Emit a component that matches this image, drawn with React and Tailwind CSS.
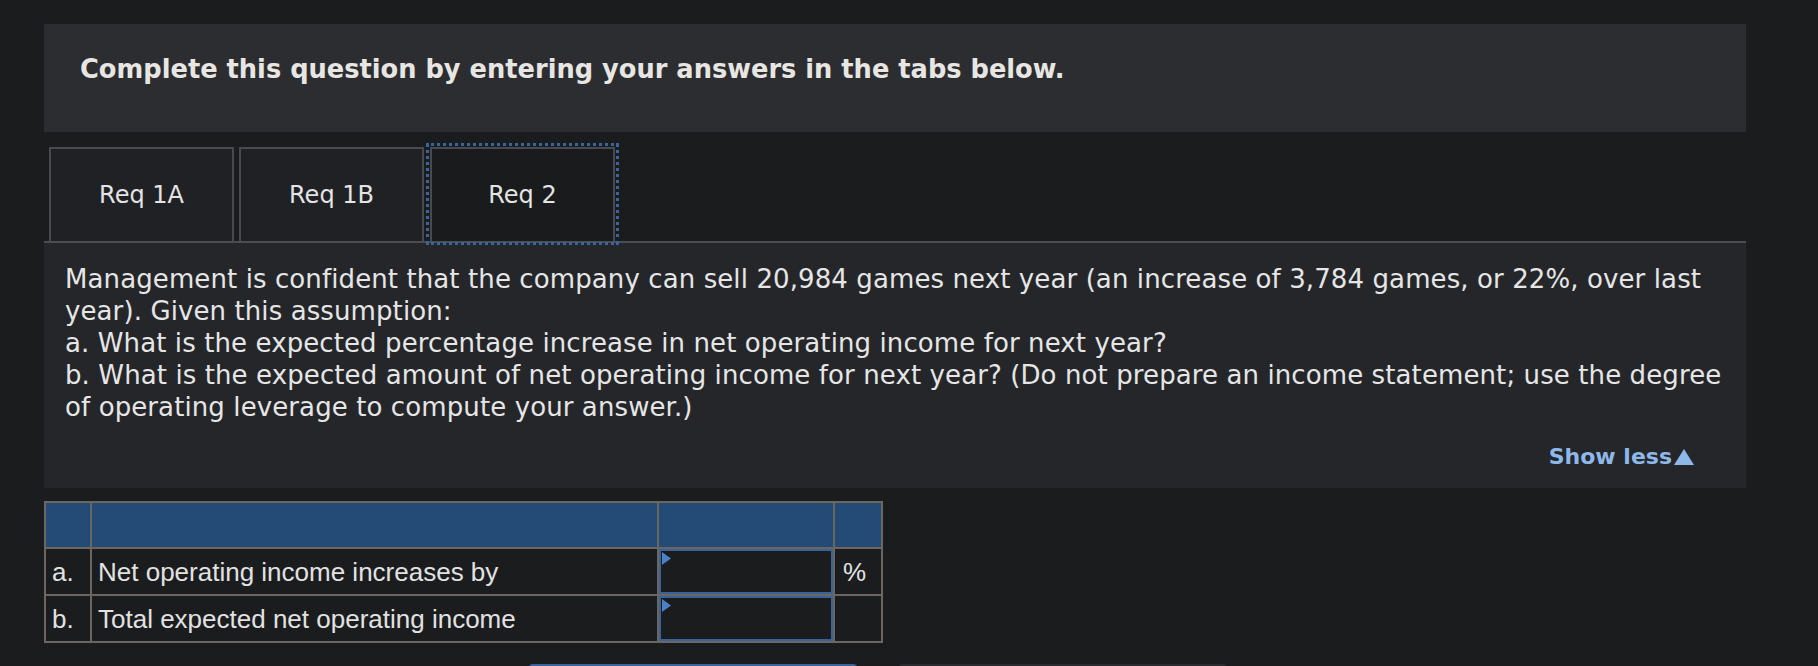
import React from 'react';

const TABS = ['Req 1A', 'Req 1B', 'Req 2'];

function Tabs() {
  return (
    <div className="flex items-end pl-[5px] pt-[15px]">
      {TABS.map((t, i) => {
        const active = i === 2;
        return (
          <div
            key={t}
            className={
              active
                ? 'ml-[6px] w-[185px] h-[94px] flex items-center justify-center border-2 border-b-0 border-[#474b4f] bg-[#1a1b1d] outline-[3px] outline-dotted outline-[#3a63a0] outline-offset-[1px] text-[24px] text-[#e4e4e4]'
                : 'ml-[5px] first:ml-0 w-[185px] h-[94px] flex items-center justify-center border-2 border-b-0 border-[#474b4f] bg-[#202124] text-[24px] text-[#e4e4e4]'
            }
          >
            {t}
          </div>
        );
      })}
    </div>
  );
}

function AnswerTable() {
  const rows = [
    { k: 'a.', label: 'Net operating income increases by', unit: '%' },
    { k: 'b.', label: 'Total expected net operating income', unit: '' },
  ];
  return (
    <table className="mt-[13px] border-collapse border-2 border-[#6b665f] font-['Liberation_Sans',Arial,sans-serif] text-[26px] text-[#e2e2e2]">
      <thead>
        <tr className="bg-[#244a76] h-[46px]">
          <th className="w-[46px] border-2 border-[#6b665f]"></th>
          <th className="w-[567px] border-2 border-[#6b665f]"></th>
          <th className="w-[176px] border-2 border-[#6b665f]"></th>
          <th className="w-[48px] border-2 border-[#6b665f]"></th>
        </tr>
      </thead>
      <tbody>
        {rows.map((r) => (
          <tr key={r.k} className="h-[47px]">
            <td className="border-2 border-[#6b665f] pl-[6px] leading-none">{r.k}</td>
            <td className="border-2 border-[#6b665f] pl-[6px] leading-none">{r.label}</td>
            <td className="border-2 border-[#6b665f] p-0">
              <div className="relative h-[45px] border-2 border-[#3a6399] bg-[#1b1c1e]">
                <svg className="absolute left-[1px] top-[1px]" width="9" height="13" viewBox="0 0 9 13">
                  <polygon points="0,0 9,6.5 0,13" fill="#4a80c6" />
                </svg>
              </div>
            </td>
            <td className="border-2 border-[#6b665f] pl-[8px] leading-none">{r.unit}</td>
          </tr>
        ))}
      </tbody>
    </table>
  );
}

export default function App() {
  return (
    <div className="w-[1818px] h-[666px] overflow-hidden bg-[#1b1c1e] pl-[44px] pt-[24px] font-['DejaVu_Sans',Verdana,sans-serif]">
      <div className="w-[1702px]">
        {/* instructions */}
        <div className="h-[108px] bg-[#2c2d30] pl-[36px] pt-[31px]">
          <p className="text-[25.7px] font-bold text-[#e8e6e3] leading-[28px]">
            Complete this question by entering your answers in the tabs below.
          </p>
        </div>

        <Tabs />

        {/* question body */}
        <div className="border-t-2 border-[#4a4d52] bg-[#25262a] h-[247px] pl-[21px] pr-[10px] pt-[20px]">
          <p className="text-[26px] leading-[32px] tracking-[0.1px] text-[#e6e6e6]">
            Management is confident that the company can sell 20,984 games next year (an increase of 3,784 games, or 22%, over last year). Given this assumption:
            <br />
            a. What is the expected percentage increase in net operating income for next year?
            <br />
            b. What is the expected amount of net operating income for next year? (Do not prepare an income statement; use the degree of operating leverage to compute your answer.)
          </p>
          <div className="flex justify-end pr-[41px] mt-[20px]">
            <button className="text-[22px] font-bold text-[#8db8e8] leading-[28px] flex items-center">
              Show less
              <svg className="ml-[1px]" width="22" height="18" viewBox="0 0 22 18">
                <polygon points="11,1 21,17 1,17" fill="#8db8e8" />
              </svg>
            </button>
          </div>
        </div>

        <AnswerTable />

        <div className="flex gap-[40px] mt-[21px] pl-[484px]">
          <div className="w-[330px] h-[40px] rounded-[5px] bg-[#3a6498]"></div>
          <div className="w-[330px] h-[40px] rounded-[5px] bg-[#2a2b2e]"></div>
        </div>
      </div>
    </div>
  );
}
